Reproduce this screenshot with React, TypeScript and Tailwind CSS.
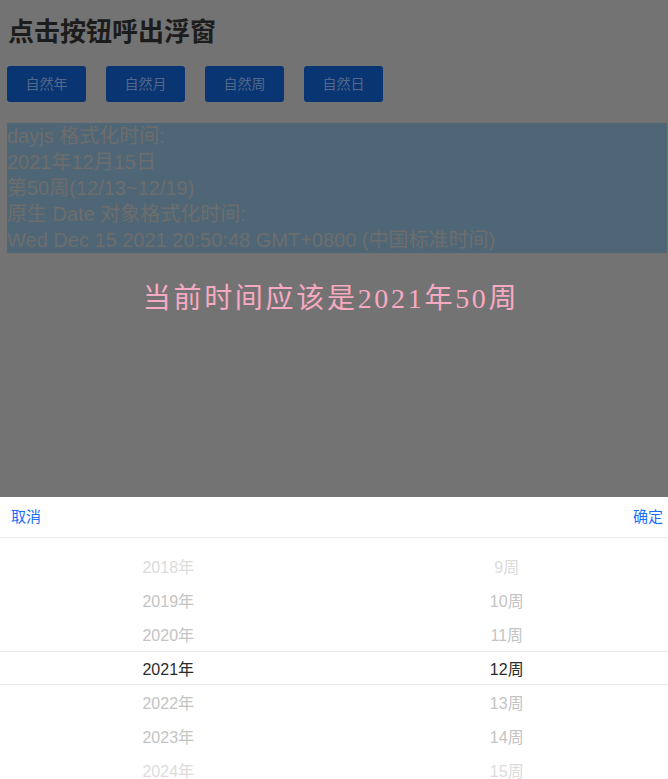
import React from "react";

const years = [
  { y: "2018年", w: "9周", c: "text-[#dcdcdc]" },
  { y: "2019年", w: "10周", c: "text-[#c4c4c4]" },
  { y: "2020年", w: "11周", c: "text-[#c4c4c4]" },
  { y: "2021年", w: "12周", c: "text-[#2b2b2b]" },
  { y: "2022年", w: "13周", c: "text-[#c4c4c4]" },
  { y: "2023年", w: "14周", c: "text-[#c4c4c4]" },
  { y: "2024年", w: "15周", c: "text-[#dcdcdc]" },
];

export default function App() {
  const sans = { fontFamily: '"Liberation Sans", Arial, "Noto Sans CJK SC", sans-serif' };
  return (
    <div className="relative w-full h-[779px] overflow-hidden bg-[#737373]" style={sans}>
      <div className="pl-[7px] pr-[1px]">
        <h1 className="mt-[16px] ml-[1px] text-[26px] leading-[32px] font-bold text-[#1c1c1c]">点击按钮呼出浮窗</h1>
        <div className="mt-[18px] flex gap-[20px]">
          {["自然年", "自然月", "自然周", "自然日"].map((t) => (
            <button key={t} className="w-[79px] h-[36px] rounded-[3px] bg-[#0a3573] text-[14px] text-[#52698a]">
              {t}
            </button>
          ))}
        </div>
        <div className="mt-[21px] bg-[#4f6676] text-[#6d6d6d] text-[20px] leading-[26px]">
          <div>dayjs 格式化时间:</div>
          <div>2021年12月15日</div>
          <div>第50周(12/13~12/19)</div>
          <div>原生 Date 对象格式化时间:</div>
          <div>Wed Dec 15 2021 20:50:48 GMT+0800 (中国标准时间)</div>
        </div>
        <div
          className="mt-[26px] pr-[12px] text-center text-[28px] leading-[40px] tracking-[2.7px] text-[#f7a9c2]"
          style={{ fontFamily: '"Liberation Serif", "Noto Sans CJK SC", serif' }}
        >
          当前时间应该是2021年50周
        </div>
      </div>

      <div className="absolute left-0 right-0 top-[497px] bottom-0 bg-white">
        <div className="h-[41px] flex items-center justify-between px-[11px] border-b border-[#ebebeb] text-[15px] text-[#1a6dff]">
          <span>取消</span>
          <span className="mr-[-6px]">确定</span>
        </div>
        <div className="relative pt-[11px]">
          {years.map((r, i) => (
            <div
              key={r.y}
              className={`flex h-[34px] pt-[4px] items-center text-[16px] ${r.c} ${i === 3 ? "border-y border-[#e6e6e6]" : ""}`}
            >
              <div className="flex-1 text-center pl-[7px]">{r.y}</div>
              <div className="flex-1 text-center pl-[16px]">{r.w}</div>
            </div>
          ))}
        </div>
      </div>
    </div>
  );
}
